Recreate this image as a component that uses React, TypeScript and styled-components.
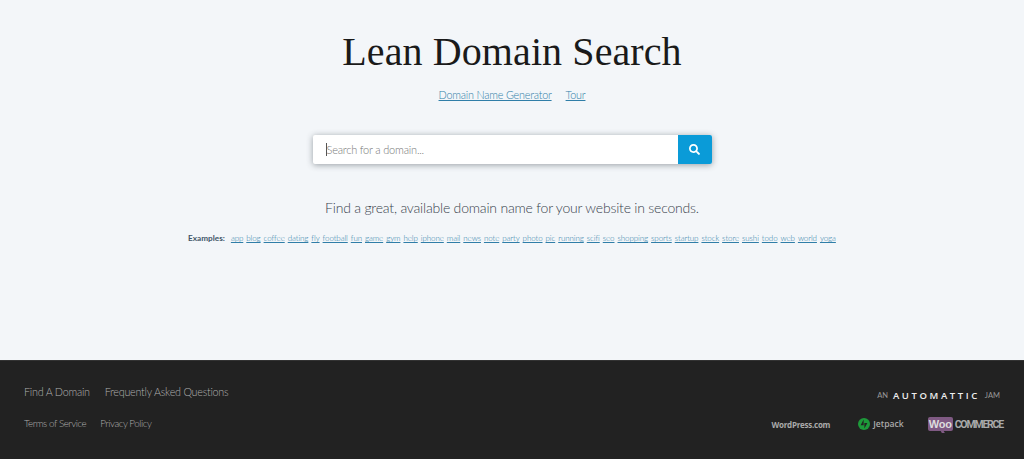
import React from "react";
import styled, { createGlobalStyle } from "styled-components";
import { FaSearch } from "react-icons/fa";

const GlobalStyle = createGlobalStyle`
  html, body {
    margin: 0;
    padding: 0;
    background: #f3f6f9;
    font-family: Lato, "Open Sans", "Liberation Sans", sans-serif;
  }
  * {
    box-sizing: border-box;
  }
`;

const Page = styled.div`
  width: 1024px;
  height: 459px;
  display: flex;
  flex-direction: column;
  overflow: hidden;
`;

const Main = styled.main`
  height: 360px;
  display: flex;
  flex-direction: column;
  align-items: center;
  padding-top: 29px;
`;

const Title = styled.h1`
  margin: 0;
  font-family: "Liberation Serif", serif;
  font-weight: 400;
  font-size: 40px;
  line-height: 46px;
  letter-spacing: 0.1px;
  color: #1a1a1a;
`;

const TopLinks = styled.nav`
  display: flex;
  gap: 14px;
  margin-top: 12px;
  height: 16px;
`;

const TopLink = styled.a`
  font-size: 10.8px;
  line-height: 16px;
  font-weight: 300;
  letter-spacing: -0.2px;
  color: #2f7ea8;
  text-decoration: underline;
`;

const SearchBar = styled.form`
  position: relative;
  width: 399px;
  height: 29px;
  margin-top: 32px;
  display: flex;
  background: #fff;
  border-radius: 2px;
  box-shadow: 0 1px 6px rgba(40, 50, 60, 0.45);
`;

const SearchInput = styled.input`
  flex: 1;
  min-width: 0;
  border: none;
  outline: none;
  background: transparent;
  padding: 0 14px;
  font-family: inherit;
  font-size: 11px;
  font-weight: 300;
  letter-spacing: -0.2px;
  color: #333;

  &::placeholder {
    color: #777;
  }
`;

const Caret = styled.span`
  position: absolute;
  left: 13px;
  top: 8px;
  width: 1px;
  height: 13px;
  background: #555;
`;

const SearchButton = styled.button`
  width: 34px;
  border: none;
  padding: 0;
  display: flex;
  align-items: center;
  justify-content: center;
  background: #0a9bd8;
  color: #fff;
  font-size: 11px;
  border-radius: 0 2px 2px 0;
`;

const Tagline = styled.p`
  margin: 35px 0 0;
  font-size: 14px;
  line-height: 18px;
  font-weight: 300;
  letter-spacing: -0.2px;
  color: #39434d;
`;

const Examples = styled.div`
  display: flex;
  align-items: baseline;
  margin-top: 15px;
  font-size: 8px;
  line-height: 12px;
`;

const ExamplesLabel = styled.strong`
  color: #3f5568;
  font-size: 8.2px;
  font-weight: 700;
  margin-right: 3px;
`;

const ExampleLink = styled.a`
  margin-left: 3px;
  color: #2f7ea8;
  font-weight: 300;
  letter-spacing: -0.1px;
  text-decoration: underline;
`;

const Footer = styled.footer`
  height: 99px;
  background: #222;
  border-top: 1px solid #333;
  display: flex;
  justify-content: space-between;
  padding: 24px 21px 0 24px;
`;

const FooterColumn = styled.div`
  display: flex;
  flex-direction: column;
`;

const LinkRow = styled.div<{ $gap: number; $top?: number }>`
  display: flex;
  gap: ${(p) => p.$gap}px;
  margin-top: ${(p) => p.$top ?? 0}px;
`;

const FooterLink = styled.span<{ $small?: boolean }>`
  color: #b0b0b0;
  font-weight: 300;
  font-size: ${(p) => (p.$small ? 9.8 : 10.8)}px;
  letter-spacing: ${(p) => (p.$small ? -0.45 : -0.25)}px;
  line-height: 14px;
`;

const JamLine = styled.div`
  display: flex;
  justify-content: flex-end;
  align-items: center;
  gap: 5px;
  margin-top: 4px;
  color: #9a9a9a;
  font-size: 7.5px;
  line-height: 14px;
  padding-right: 3px;
`;

const Automattic = styled.span`
  font-family: "Open Sans", sans-serif;
  color: #eee;
  font-size: 9.5px;
  font-weight: 600;
  letter-spacing: 2.6px;
`;

const BrandRow = styled.div`
  display: flex;
  align-items: center;
  margin-top: 14px;
`;

const Wordpress = styled.span`
  font-family: "Open Sans", sans-serif;
  color: #aaa;
  font-size: 8px;
  font-weight: 700;
  letter-spacing: -0.25px;
  margin-right: 28px;
`;

const Jetpack = styled.span`
  font-family: "Open Sans", sans-serif;
  display: flex;
  align-items: center;
  gap: 3px;
  color: #aaa;
  font-size: 8.6px;
  font-weight: 600;
  margin-right: 24px;
`;

const Woo = styled.span`
  font-family: Roboto, sans-serif;
  display: flex;
  align-items: center;
  color: #aaa;
  font-size: 10.5px;
  font-weight: 700;
  letter-spacing: -1.2px;
`;

const WooBadge = styled.span`
  position: relative;
  background: #7f5a83;
  color: #ddd;
  font-family: "Liberation Sans", sans-serif;
  font-size: 11px;
  font-weight: 700;
  letter-spacing: -0.2px;
  line-height: 14px;
  padding: 0 1px;
  border-radius: 2px;
  margin-right: 2px;

  &::after {
    content: "";
    position: absolute;
    left: 13px;
    bottom: -2px;
    width: 3px;
    height: 3px;
    background: #7f5a83;
    transform: skewX(30deg);
  }
`;

const WORDS = [
  "app", "blog", "coffee", "dating", "fly", "football", "fun", "game", "gym",
  "help", "iphone", "mail", "news", "note", "party", "photo", "pic", "running",
  "scifi", "seo", "shopping", "sports", "startup", "stock", "store", "sushi",
  "todo", "web", "world", "yoga",
];

const App: React.FC = () => {
  return (
    <Page>
      <GlobalStyle />
      <Main>
        <Title>Lean Domain Search</Title>
        <TopLinks>
          <TopLink href="#">Domain Name Generator</TopLink>
          <TopLink href="#">Tour</TopLink>
        </TopLinks>
        <SearchBar>
          <SearchInput placeholder="Search for a domain..." />
          <Caret />
          <SearchButton type="button">
            <FaSearch />
          </SearchButton>
        </SearchBar>
        <Tagline>Find a great, available domain name for your website in seconds.</Tagline>
        <Examples>
          <ExamplesLabel>Examples:</ExamplesLabel>
          {WORDS.map((w) => (
            <ExampleLink href="#" key={w}>
              {w}
            </ExampleLink>
          ))}
        </Examples>
      </Main>
      <Footer>
        <FooterColumn>
          <LinkRow $gap={15}>
            <FooterLink>Find A Domain</FooterLink>
            <FooterLink>Frequently Asked Questions</FooterLink>
          </LinkRow>
          <LinkRow $gap={14} $top={17}>
            <FooterLink $small>Terms of Service</FooterLink>
            <FooterLink $small>Privacy Policy</FooterLink>
          </LinkRow>
        </FooterColumn>
        <FooterColumn>
          <JamLine>
            AN <Automattic>AUTOMATTIC</Automattic> JAM
          </JamLine>
          <BrandRow>
            <Wordpress>WordPress.com</Wordpress>
            <Jetpack>
              <svg width="12" height="12" viewBox="0 0 32 32">
                <circle cx="16" cy="16" r="16" fill="#1d9a3a" />
                <path d="M15 4v15H7z M17 28V13h8z" fill="#222" />
              </svg>
              Jetpack
            </Jetpack>
            <Woo>
              <WooBadge>Woo</WooBadge>
              COMMERCE
            </Woo>
          </BrandRow>
        </FooterColumn>
      </Footer>
    </Page>
  );
};

export default App;
